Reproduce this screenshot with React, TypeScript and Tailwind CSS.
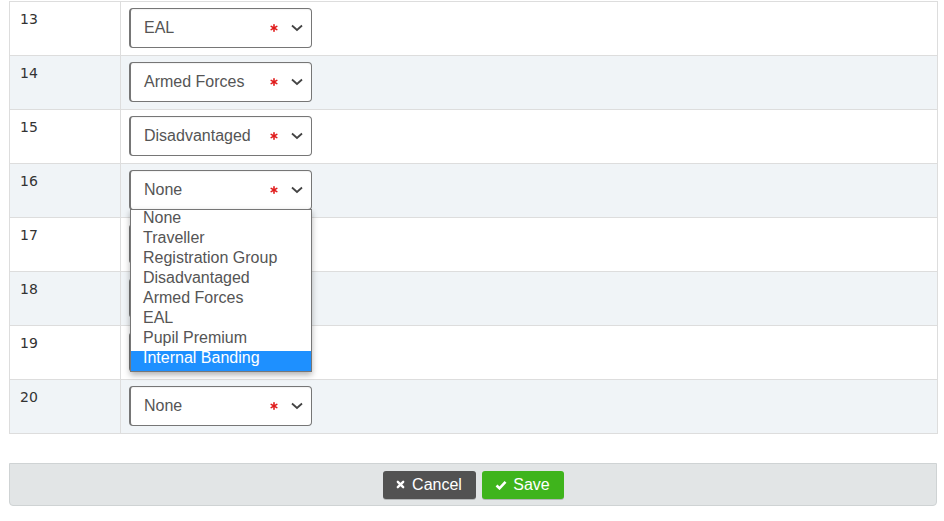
import React from "react";

// rows 17–19 sit under the open list, so their values are hidden
const rows = [
  { n: 13, value: "EAL" },
  { n: 14, value: "Armed Forces" },
  { n: 15, value: "Disadvantaged" },
  { n: 16, value: "None", open: true },
  { n: 17, value: "" },
  { n: 18, value: "" },
  { n: 19, value: "" },
  { n: 20, value: "None" },
];

const options = [
  "None",
  "Traveller",
  "Registration Group",
  "Disadvantaged",
  "Armed Forces",
  "EAL",
  "Pupil Premium",
  "Internal Banding",
];

function Required() {
  return (
    <svg width="8" height="8" viewBox="0 0 8 8" className="shrink-0">
      <g stroke="#e01b1b" strokeWidth="1.6" strokeLinecap="round">
        <line x1="4" y1="0.8" x2="4" y2="7.2" />
        <line x1="1.2" y1="2.4" x2="6.8" y2="5.6" />
        <line x1="1.2" y1="5.6" x2="6.8" y2="2.4" />
      </g>
    </svg>
  );
}

function Chevron() {
  return (
    <svg width="12" height="8" viewBox="0 0 12 8" className="shrink-0">
      <polyline points="1,1.5 6,6 11,1.5" fill="none" stroke="#444" strokeWidth="1.8" />
    </svg>
  );
}

function GroupSelect({ value, open }: { value: string; open?: boolean }) {
  return (
    <div className="relative w-[183px]">
      <div className="flex h-[40px] items-center rounded-[4px] border border-l-2 border-[#767676] bg-white pl-[13px] pr-[8px] shadow-[inset_0_1px_1px_rgba(0,0,0,0.05)]">
        <span className="flex-1 text-[16px] text-[#555]">{value}</span>
        <span className="mr-[13px] flex items-center">
          <Required />
        </span>
        <Chevron />
      </div>
      {open && (
        <ul className="absolute left-[1px] top-[39px] z-10 w-[182px] border border-[#767676] bg-white pt-[1px] shadow-[0_3px_6px_rgba(0,0,0,0.3)]">
          {options.map((o) => (
            <li
              key={o}
              className={
                o === "Internal Banding"
                  ? "h-[20px] bg-[#1e90ff] pl-[12px] text-[16px] leading-[14px] text-white"
                  : "h-[20px] pl-[12px] text-[16px] leading-[14px] text-[#555]"
              }
            >
              {o}
            </li>
          ))}
        </ul>
      )}
    </div>
  );
}

export default function App() {
  return (
    <div className="h-[521px] w-[944px] overflow-hidden bg-white pt-[1px] font-['Liberation_Sans',Arial,sans-serif]">
      <div className="ml-[9px] w-[929px] border-t border-l border-r border-[#dddddd]">
        {rows.map((r, i) => (
          <div
            key={r.n}
            className={
              i % 2 === 1
                ? "flex h-[54px] border-b border-[#dddddd] bg-[#f0f4f7]"
                : "flex h-[54px] border-b border-[#dddddd] bg-white"
            }
          >
            <div className="w-[111px] shrink-0 border-r border-[#dddddd] pl-[10px] pt-[7px] font-['DejaVu_Sans',Verdana,sans-serif] text-[14px] text-[#333]">
              {r.n}
            </div>
            <div className="flex-1 pl-[8px] pt-[6px]">
              <GroupSelect value={r.value} open={r.open} />
            </div>
          </div>
        ))}
      </div>

      <div className="ml-[9px] mt-[29px] flex h-[43px] w-[928px] items-center justify-center gap-[6px] rounded-b-[4px] border border-[#cfd3d4] bg-[#e2e5e6]">
        <button className="flex h-[28px] w-[93px] items-center justify-center gap-[7px] rounded-[3px] bg-[#525252] text-[16px] text-white shadow-[0_1px_0_rgba(0,0,0,0.2)]">
          <svg width="9" height="9" viewBox="0 0 10 10">
            <g stroke="white" strokeWidth="2.6" strokeLinecap="round">
              <line x1="2" y1="2" x2="8" y2="8" />
              <line x1="8" y1="2" x2="2" y2="8" />
            </g>
          </svg>
          Cancel
        </button>
        <button className="flex h-[28px] w-[82px] items-center justify-center gap-[6px] rounded-[3px] bg-[#3fb41c] text-[16px] text-white shadow-[0_1px_0_rgba(0,0,0,0.2)]">
          <svg width="12" height="10" viewBox="0 0 12 10">
            <polyline points="1.5,5.5 4.5,8.3 10.5,1.8" fill="none" stroke="white" strokeWidth="2.6" />
          </svg>
          Save
        </button>
      </div>
    </div>
  );
}
